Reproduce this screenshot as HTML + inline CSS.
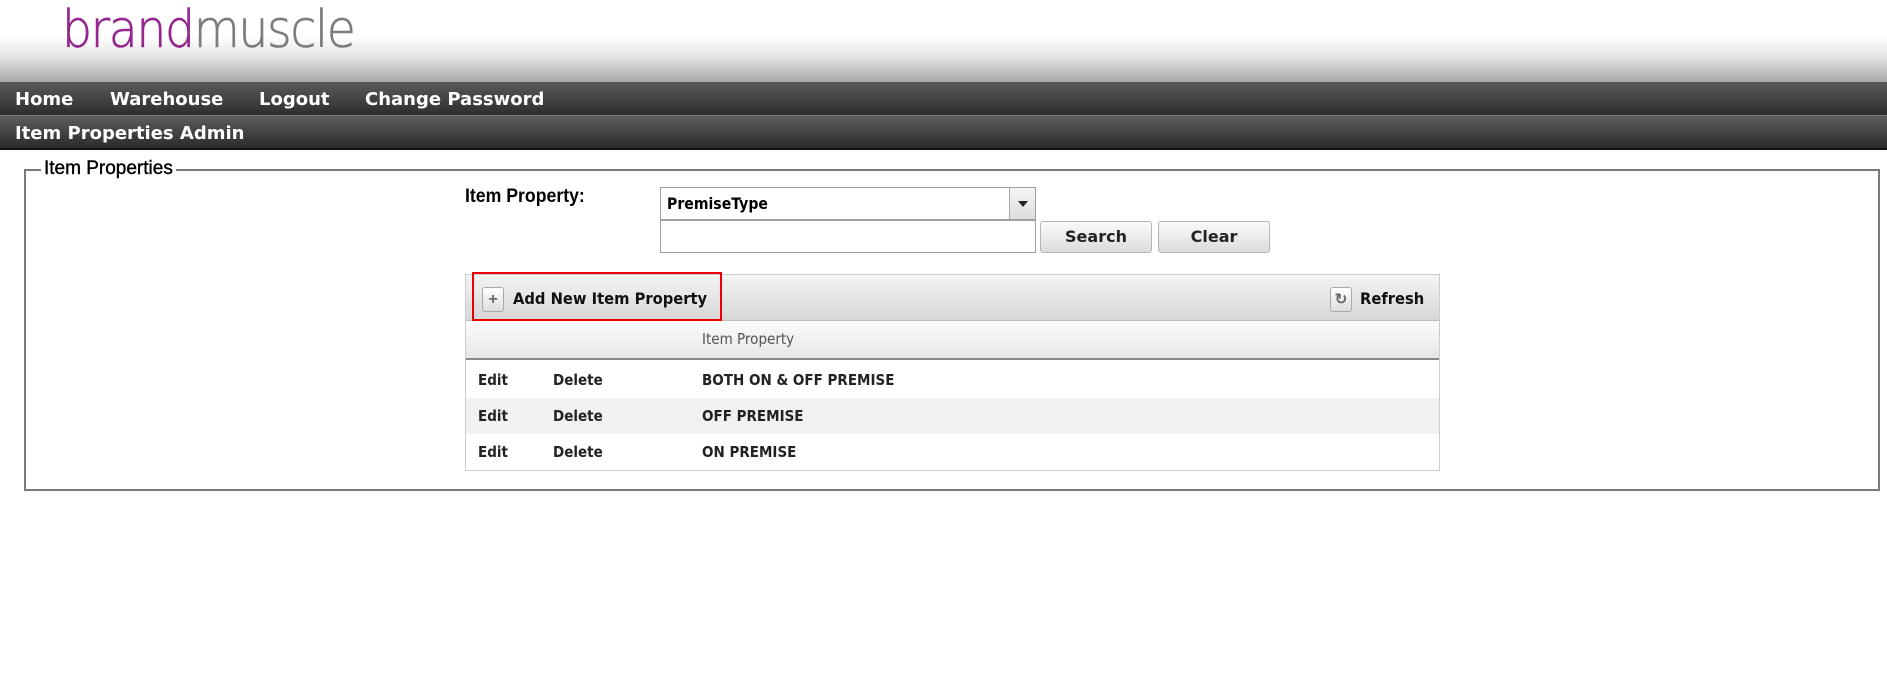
<!DOCTYPE html>
<html><head><meta charset="utf-8"><style>
*{margin:0;padding:0;box-sizing:border-box}
body{width:1887px;height:699px;background:#fff;font-family:"Liberation Sans",Arial,sans-serif;position:relative;overflow:hidden}
.hdr{position:absolute;left:0;top:0;width:1887px;height:82px;background:linear-gradient(#fff 0px,#fff 36px,#e8e8e8 55px,#a9a9a9 82px)}
.logo{position:absolute;left:62px;top:0px;font-size:52px;letter-spacing:-1.5px;font-family:"DejaVu Sans",sans-serif;font-weight:200;transform:scaleX(.91);transform-origin:left;-webkit-text-stroke:0.6px currentColor}
.logo .b{color:#93268f}.logo .m{color:#7c7c7c}
.nav{position:absolute;left:0;top:82px;width:1887px;height:34px;background:linear-gradient(#5a5a5a,#2e2e2e);border-bottom:1px solid #777}
.nav span,.sub span{position:absolute;top:7px;color:#fff;font:bold 18px "DejaVu Sans",sans-serif;letter-spacing:0}
.sub{position:absolute;left:0;top:116px;width:1887px;height:34px;background:linear-gradient(#5e5e5e,#2a2a2a);border-bottom:2px solid #111}
.fs{position:absolute;left:24px;top:169px;width:1856px;height:322px;border:2px solid #7a7a7a}
.lg{position:absolute;left:41px;top:158px;background:#fff;padding:0 3px;font-size:19px;color:#000;-webkit-text-stroke:0.4px #000}
.lbl{position:absolute;left:465px;top:186px;font:bold 19px "Liberation Sans",sans-serif;transform:scaleX(.93);transform-origin:left}
.sel{position:absolute;left:660px;top:187px;width:376px;height:33px;border:1px solid #a0a0a0;background:#fff}
.sel .t{position:absolute;left:6px;top:6px;font:bold 16px "DejaVu Sans",sans-serif;transform:scaleX(.88);transform-origin:left}
.sel .arr{position:absolute;right:0;top:0;width:26px;height:31px;border-left:1px solid #aaa;background:linear-gradient(#f5f5f5,#ddd)}
.sel .arr:after{content:"";position:absolute;left:8px;top:13px;border:5px solid transparent;border-top:6px solid #222;border-bottom:0}
.inp{position:absolute;left:660px;top:220px;width:376px;height:33px;border:1px solid #a0a0a0;background:#fff}
.btn{position:absolute;top:221px;height:32px;border:1px solid #b5b5b5;border-radius:3px;background:linear-gradient(#fafafa,#dcdcdc);font:bold 16px "DejaVu Sans",sans-serif;text-align:center;line-height:30px;color:#222}
.grid{position:absolute;left:465px;top:274px;width:975px;height:197px;border:1px solid #ccc}
.tb{position:absolute;left:0;top:0;width:973px;height:46px;background:linear-gradient(#f4f4f4,#d6d6d6);border-bottom:1px solid #bbb}
.tb .t{position:absolute;top:14px;font:bold 16px "DejaVu Sans",sans-serif;color:#111;transform:scaleX(.92);transform-origin:left}
.ic{position:absolute;top:12px;width:22px;height:25px;border:1px solid #aaa;border-radius:3px;background:linear-gradient(#fff,#ddd);color:#666;font:bold 16px sans-serif;text-align:center;line-height:23px}
.hd{position:absolute;left:0;top:46px;width:973px;height:39px;background:linear-gradient(#fcfcfc,#e6e6e6);border-bottom:2px solid #888}
.hd span{position:absolute;left:236px;top:9px;font:15px "DejaVu Sans",sans-serif;color:#555;transform:scaleX(.9);transform-origin:left}
.row{position:absolute;left:0;width:973px;height:36px}
.row span{position:absolute;top:9px;font:bold 15px "DejaVu Sans",sans-serif;color:#222;transform:scaleX(.9);transform-origin:left}
.red{position:absolute;left:472px;top:272px;width:250px;height:49px;border:2px solid #e00}
</style></head><body>
<div class="hdr"><div class="logo"><span class="b">brand</span><span class="m">muscle</span></div></div>
<div class="nav"><span style="left:15px">Home</span><span style="left:110px">Warehouse</span><span style="left:259px">Logout</span><span style="left:365px">Change Password</span></div>
<div class="sub"><span style="left:15px">Item Properties Admin</span></div>
<div class="fs"></div>
<div class="lg">Item Properties</div>
<div class="lbl">Item Property:</div>
<div class="sel"><span class="t">PremiseType</span><div class="arr"></div></div>
<div class="inp"></div>
<div class="btn" style="left:1040px;width:112px">Search</div>
<div class="btn" style="left:1158px;width:112px">Clear</div>
<div class="grid">
<div class="tb"><div class="ic" style="left:16px">+</div><span class="t" style="left:47px">Add New Item Property</span>
<div class="ic" style="left:864px;font-size:15px">↻</div><span class="t" style="left:894px">Refresh</span></div>
<div class="hd"><span>Item Property</span></div>
<div class="row" style="top:87px;background:#fff"><span style="left:12px">Edit</span><span style="left:87px">Delete</span><span style="left:236px">BOTH ON &amp; OFF PREMISE</span></div>
<div class="row" style="top:123px;background:#f1f1f1"><span style="left:12px">Edit</span><span style="left:87px">Delete</span><span style="left:236px">OFF PREMISE</span></div>
<div class="row" style="top:159px;background:#fff"><span style="left:12px">Edit</span><span style="left:87px">Delete</span><span style="left:236px">ON PREMISE</span></div>
</div>
<div class="red"></div>
</body></html>
